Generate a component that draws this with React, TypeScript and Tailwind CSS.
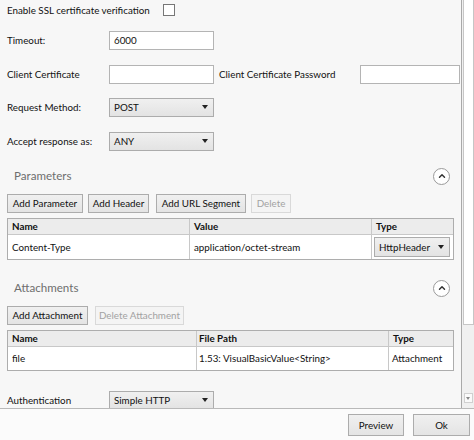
import { ChevronUp } from 'lucide-react';

const font = { fontFamily: 'Lato, "Noto Sans", sans-serif' };

function TextInput({ value = '', className = '' }: { value?: string; className?: string }) {
  return (
    <div className={`h-[19px] border border-[#b4b4b4] bg-white px-[4px] flex items-center text-[9.8px] text-[#111] ${className}`}>
      {value}
    </div>
  );
}

function Combo({ value, className = '' }: { value: string; className?: string }) {
  return (
    <div
      className={`h-[19px] border border-[#acacac] bg-gradient-to-b from-[#f0f0f0] to-[#e3e3e3] pl-[4px] pr-[5px] flex items-center justify-between text-[9.8px] text-[#111] whitespace-nowrap ${className}`}
    >
      <span>{value}</span>
      <span className="w-0 h-0 border-l-[3px] border-r-[3px] border-t-[4px] border-l-transparent border-r-transparent border-t-[#222]" />
    </div>
  );
}

function Btn({ label, disabled = false, className = '' }: { label: string; disabled?: boolean; className?: string }) {
  return (
    <div
      className={`h-[19px] px-[4px] flex items-center justify-center text-[9.8px] border whitespace-nowrap ${
        disabled
          ? 'border-[#d9d9d9] bg-[#f4f4f4] text-[#a2a2a2]'
          : 'border-[#acacac] bg-gradient-to-b from-[#f0f0f0] to-[#e4e4e4] text-[#111]'
      } ${className}`}
    >
      {label}
    </div>
  );
}

function FormRow({ label, children, className = '' }: { label: string; children: React.ReactNode; className?: string }) {
  return (
    <div className={`h-[20px] flex items-center ${className}`}>
      <div className="w-[102px] shrink-0 text-[9.8px] text-[#111] whitespace-nowrap">{label}</div>
      {children}
    </div>
  );
}

function SectionHeader({ title, className = '' }: { title: string; className?: string }) {
  return (
    <div className={`h-[20px] flex items-center justify-between pl-[7px] pr-[11px] ${className}`}>
      <span className="text-[11.6px] text-[#6e6e6e]">{title}</span>
      <div className="w-[17px] h-[17px] rounded-full border border-[#9a9a9a] bg-white flex items-center justify-center">
        <ChevronUp className="w-[10px] h-[10px] text-[#333]" strokeWidth={3.5} />
      </div>
    </div>
  );
}

export default function App() {
  return (
    <div className="w-[474px] h-[440px] bg-[#f7f7f7] flex flex-col overflow-hidden" style={font}>
      {/* scrolling area */}
      <div className="h-[409px] flex border-b border-[#b9b9b9] shrink-0">
        <div className="w-[462px] h-full overflow-hidden border-r border-[#a9a9a9] pl-[7px]">
          <div className="h-[20px] flex items-center text-[9.8px] text-[#111] whitespace-nowrap">
            <span>Enable SSL certificate verification</span>
            <span className="ml-[13px] w-[12px] h-[12px] border border-[#777] bg-white" />
          </div>

          <FormRow label="Timeout:" className="mt-[10px]">
            <TextInput value="6000" className="w-[105px]" />
          </FormRow>

          <FormRow label="Client Certificate" className="mt-[14px]">
            <TextInput className="w-[105px]" />
            <span className="ml-[5px] w-[141px] shrink-0 text-[9.8px] text-[#111] whitespace-nowrap">Client Certificate Password</span>
            <TextInput className="w-[100px] shrink-0" />
          </FormRow>

          <FormRow label="Request Method:" className="mt-[13px]">
            <Combo value="POST" className="w-[105px]" />
          </FormRow>

          <FormRow label="Accept response as:" className="mt-[14px]">
            <Combo value="ANY" className="w-[105px]" />
          </FormRow>

          <SectionHeader title="Parameters" className="mt-[15px]" />

          <div className="mt-[8px] flex gap-[5px]">
            <Btn label="Add Parameter" className="w-[76px]" />
            <Btn label="Add Header" className="w-[61px]" />
            <Btn label="Add URL Segment" className="w-[90px] ml-[2px]" />
            <Btn label="Delete" disabled className="w-[40px]" />
          </div>

          <div className="mt-[5px] w-[447px] border border-[#adadad] text-[9.8px] text-[#111] whitespace-nowrap">
            <div className="h-[16px] flex bg-[#ececec] border-b border-[#c8c8c8] font-bold">
              <div className="w-[182px] pl-[4px] border-r border-[#c8c8c8] flex items-center">Name</div>
              <div className="w-[182px] pl-[4px] border-r border-[#c8c8c8] flex items-center">Value</div>
              <div className="flex-1 pl-[4px] flex items-center">Type</div>
            </div>
            <div className="h-[24px] flex bg-white">
              <div className="w-[182px] pl-[4px] border-r border-[#c8c8c8] flex items-center">Content-Type</div>
              <div className="w-[182px] pl-[4px] border-r border-[#c8c8c8] flex items-center">application/octet-stream</div>
              <div className="flex-1 flex items-center pl-[2px] pr-[3px]">
                <Combo value="HttpHeader" className="w-full h-[20px]" />
              </div>
            </div>
          </div>

          <SectionHeader title="Attachments" className="mt-[18px]" />

          <div className="mt-[8px] flex gap-[7px]">
            <Btn label="Add Attachment" className="w-[81px]" />
            <Btn label="Delete Attachment" disabled className="w-[89px]" />
          </div>

          <div className="mt-[5px] w-[447px] border border-[#adadad] text-[9.8px] text-[#111] whitespace-nowrap">
            <div className="h-[16px] flex bg-[#ececec] border-b border-[#c8c8c8] font-bold">
              <div className="w-[189px] pl-[4px] border-r border-[#c8c8c8] flex items-center">Name</div>
              <div className="w-[192px] pl-[2px] border-r border-[#c8c8c8] flex items-center">File Path</div>
              <div className="flex-1 pl-[4px] flex items-center">Type</div>
            </div>
            <div className="h-[23px] flex bg-white">
              <div className="w-[189px] pl-[4px] border-r border-[#c8c8c8] flex items-center">file</div>
              <div className="w-[192px] pl-[2px] border-r border-[#c8c8c8] flex items-center">1.53: VisualBasicValue&lt;String&gt;</div>
              <div className="flex-1 pl-[3px] flex items-center">Attachment</div>
            </div>
          </div>

          <FormRow label="Authentication" className="mt-[19px]">
            <Combo value="Simple HTTP" className="w-[105px]" />
          </FormRow>
        </div>

        {/* scrollbar */}
        <div className="w-[12px] h-full bg-[#f0f0f0] flex flex-col items-center">
          <div className="w-[11px] h-[325px] bg-white border border-[#c6c6c6] border-t-0" />
          <div className="flex-1" />
          <div className="mb-[5px] w-[9px] h-[10px] border border-[#d0d0d0] bg-[#fafafa] flex items-center justify-center">
            <span className="w-0 h-0 border-l-[2px] border-r-[2px] border-t-[3px] border-l-transparent border-r-transparent border-t-[#888]" />
          </div>
        </div>
      </div>

      {/* footer */}
      <div className="flex-1 bg-[#fbfbfb] flex items-start justify-end pt-[5px] pr-[4px] gap-[9px]">
        <Btn label="Preview" className="w-[56px] h-[22px]" />
        <Btn label="Ok" className="w-[57px] h-[22px]" />
      </div>
    </div>
  );
}
